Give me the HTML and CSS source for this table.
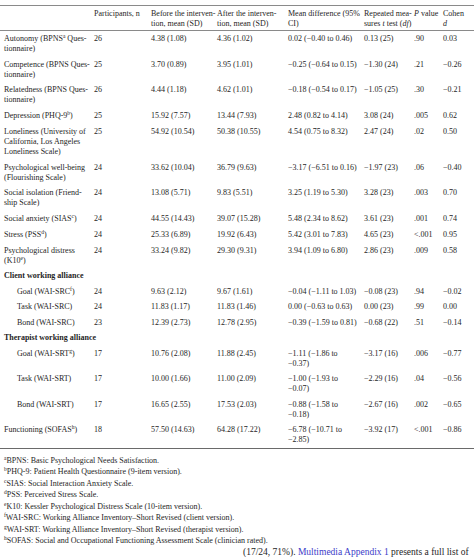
FILE: index.html
```html
<!DOCTYPE html>
<html lang="en">
<head>
<meta charset="utf-8">
<title>Outcomes table</title>
<link rel="stylesheet" href="styles.css">
</head>
<body>
<div class="page">
  <table class="results">
    <colgroup>
      <col class="c-label"><col class="c-n"><col class="c-before"><col class="c-after"><col class="c-diff"><col class="c-t"><col class="c-p"><col class="c-d">
    </colgroup>
    <thead>
      <tr>
        <th></th>
        <th>Participants, n</th>
        <th>Before the interven-<br>tion, mean (SD)</th>
        <th>After the interven-<br>tion, mean (SD)</th>
        <th>Mean difference (95%<br>CI)</th>
        <th>Repeated mea-<br>sures <i>t</i> test (<i>df</i>)</th>
        <th><i>P</i> value</th>
        <th>Cohen<br><i>d</i></th>
      </tr>
    </thead>
    <tbody>
      <tr><td>Autonomy (BPNS<sup>a</sup> Ques-<br>tionnaire)</td><td>26</td><td>4.38 (1.08)</td><td>4.36 (1.02)</td><td>0.02 (−0.40 to 0.46)</td><td>0.13 (25)</td><td>.90</td><td>0.03</td></tr>
      <tr><td>Competence (BPNS Ques-<br>tionnaire)</td><td>25</td><td>3.70 (0.89)</td><td>3.95 (1.01)</td><td>−0.25 (−0.64 to 0.15)</td><td>−1.30 (24)</td><td>.21</td><td>−0.26</td></tr>
      <tr><td>Relatedness (BPNS Ques-<br>tionnaire)</td><td>26</td><td>4.44 (1.18)</td><td>4.62 (1.01)</td><td>−0.18 (−0.54 to 0.17)</td><td>−1.05 (25)</td><td>.30</td><td>−0.21</td></tr>
      <tr class="tall"><td>Depression (PHQ-9<sup>b</sup>)</td><td>25</td><td>15.92 (7.57)</td><td>13.44 (7.93)</td><td>2.48 (0.82 to 4.14)</td><td>3.08 (24)</td><td>.005</td><td>0.62</td></tr>
      <tr><td>Loneliness (University of<br>California, Los Angeles<br>Loneliness Scale)</td><td>25</td><td>54.92 (10.54)</td><td>50.38 (10.55)</td><td>4.54 (0.75 to 8.32)</td><td>2.47 (24)</td><td>.02</td><td>0.50</td></tr>
      <tr><td>Psychological well-being<br>(Flourishing Scale)</td><td>24</td><td>33.62 (10.04)</td><td>36.79 (9.63)</td><td>−3.17 (−6.51 to 0.16)</td><td>−1.97 (23)</td><td>.06</td><td>−0.40</td></tr>
      <tr><td>Social isolation (Friend-<br>ship Scale)</td><td>24</td><td>13.08 (5.71)</td><td>9.83 (5.51)</td><td>3.25 (1.19 to 5.30)</td><td>3.28 (23)</td><td>.003</td><td>0.70</td></tr>
      <tr class="tall"><td>Social anxiety (SIAS<sup>c</sup>)</td><td>24</td><td>44.55 (14.43)</td><td>39.07 (15.28)</td><td>5.48 (2.34 to 8.62)</td><td>3.61 (23)</td><td>.001</td><td>0.74</td></tr>
      <tr><td>Stress (PSS<sup>d</sup>)</td><td>24</td><td>25.33 (6.89)</td><td>19.92 (6.43)</td><td>5.42 (3.01 to 7.83)</td><td>4.65 (23)</td><td>&lt;.001</td><td>0.95</td></tr>
      <tr><td>Psychological distress<br>(K10<sup>e</sup>)</td><td>24</td><td>33.24 (9.82)</td><td>29.30 (9.31)</td><td>3.94 (1.09 to 6.80)</td><td>2.86 (23)</td><td>.009</td><td>0.58</td></tr>
      <tr class="section"><td colspan="8">Client working alliance</td></tr>
      <tr class="sub"><td>Goal (WAI-SRC<sup>f</sup>)</td><td>24</td><td>9.63 (2.12)</td><td>9.67 (1.61)</td><td>−0.04 (−1.11 to 1.03)</td><td>−0.08 (23)</td><td>.94</td><td>−0.02</td></tr>
      <tr class="sub"><td>Task (WAI-SRC)</td><td>24</td><td>11.83 (1.17)</td><td>11.83 (1.46)</td><td>0.00 (−0.63 to 0.63)</td><td>0.00 (23)</td><td>.99</td><td>0.00</td></tr>
      <tr class="sub"><td>Bond (WAI-SRC)</td><td>23</td><td>12.39 (2.73)</td><td>12.78 (2.95)</td><td>−0.39 (−1.59 to 0.81)</td><td>−0.68 (22)</td><td>.51</td><td>−0.14</td></tr>
      <tr class="section"><td colspan="8">Therapist working alliance</td></tr>
      <tr class="sub"><td>Goal (WAI-SRT<sup>g</sup>)</td><td>17</td><td>10.76 (2.08)</td><td>11.88 (2.45)</td><td>−1.11 (−1.86 to<br>−0.37)</td><td>−3.17 (16)</td><td>.006</td><td>−0.77</td></tr>
      <tr class="sub"><td>Task (WAI-SRT)</td><td>17</td><td>10.00 (1.66)</td><td>11.00 (2.09)</td><td>−1.00 (−1.93 to<br>−0.07)</td><td>−2.29 (16)</td><td>.04</td><td>−0.56</td></tr>
      <tr class="sub"><td>Bond (WAI-SRT)</td><td>17</td><td>16.65 (2.55)</td><td>17.53 (2.03)</td><td>−0.88 (−1.58 to<br>−0.18)</td><td>−2.67 (16)</td><td>.002</td><td>−0.65</td></tr>
      <tr><td>Functioning (SOFAS<sup>h</sup>)</td><td>18</td><td>57.50 (14.63)</td><td>64.28 (17.22)</td><td>−6.78 (−10.71 to<br>−2.85)</td><td>−3.92 (17)</td><td>&lt;.001</td><td>−0.86</td></tr>
    </tbody>
  </table>
  <div class="notes">
    <p><sup>a</sup>BPNS: Basic Psychological Needs Satisfaction.</p>
    <p><sup>b</sup>PHQ-9: Patient Health Questionnaire (9-item version).</p>
    <p><sup>c</sup>SIAS: Social Interaction Anxiety Scale.</p>
    <p><sup>d</sup>PSS: Perceived Stress Scale.</p>
    <p><sup>e</sup>K10: Kessler Psychological Distress Scale (10-item version).</p>
    <p><sup>f</sup>WAI-SRC: Working Alliance Inventory–Short Revised (client version).</p>
    <p><sup>g</sup>WAI-SRT: Working Alliance Inventory–Short Revised (therapist version).</p>
    <p><sup>h</sup>SOFAS: Social and Occupational Functioning Assessment Scale (clinician rated).</p>
  </div>
  <p class="body-text">(17/24, 71%). <a href="#">Multimedia Appendix 1</a> presents a full list of</p>
</div>
</body>
</html>
```

FILE: styles.css
```css
html, body {
  margin: 0;
  padding: 0;
  background: #fff;
}
.page {
  width: 474px;
  height: 557px;
  overflow: hidden;
  padding-top: 5px;
  box-sizing: border-box;
  font-family: "Liberation Serif", "Times New Roman", serif;
  color: #1e1e1e;
  font-size: 8px;
}
.results {
  width: 474px;
  table-layout: fixed;
  border-collapse: collapse;
}
.c-label { width: 90px; }
.c-n { width: 57px; }
.c-before { width: 66px; }
.c-after { width: 71px; }
.c-diff { width: 76px; }
.c-t { width: 50px; }
.c-p { width: 29px; }
.c-d { width: 35px; }
.results thead tr {
  border-top: 1px solid #8a8a8a;
  border-bottom: 1px solid #8a8a8a;
}
.results tbody {
  border-bottom: 1px solid #6a6a6a;
}
.results th,
.results td {
  padding: 3px 0 2.5px 4px;
  line-height: 10px;
  text-align: left;
  vertical-align: top;
  white-space: nowrap;
  font-weight: normal;
}
.results th {
  padding-top: 3px;
  padding-bottom: 1px;
}
.results tr.tall td {
  padding-bottom: 3.5px;
}
.results tr.sub td:first-child {
  padding-left: 17px;
}
.results tr.section td {
  font-weight: bold;
}
sup {
  font-size: 5.5px;
  line-height: 0;
  vertical-align: 3px;
}
.notes {
  padding: 6px 0 0 4px;
}
.notes p {
  margin: 0;
  line-height: 11.5px;
  white-space: nowrap;
}
.notes sup {
  vertical-align: 3px;
}
.body-text {
  margin: 0;
  padding-left: 243px;
  font-size: 9.5px;
  line-height: 11px;
  white-space: nowrap;
}
.body-text a {
  color: #3b3bc8;
  text-decoration: none;
}
```
